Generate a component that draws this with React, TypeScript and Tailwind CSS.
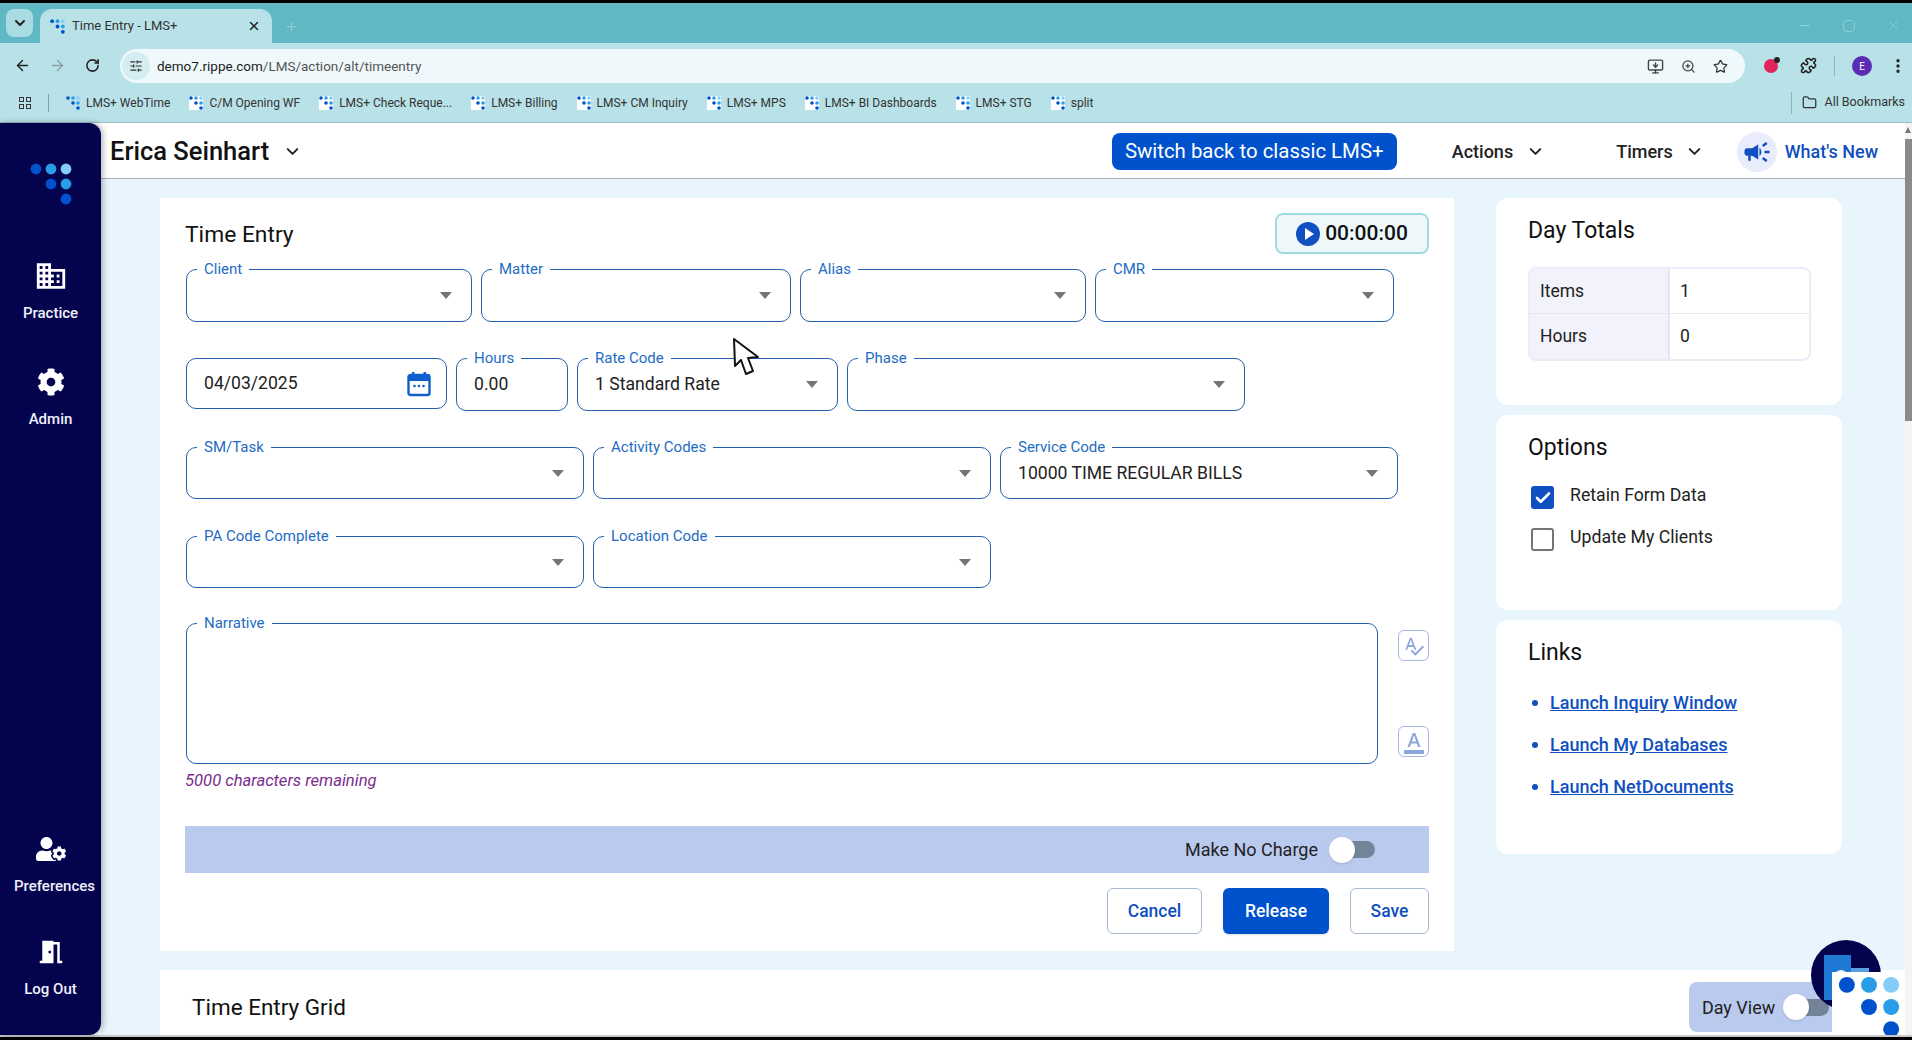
import type { ReactNode } from "react";
import { ArrowLeft, ArrowRight, RotateCw, Star, ZoomIn, Puzzle, Minus, X, Plus, ChevronDown, Folder, MonitorDown, Check, EllipsisVertical, SlidersHorizontal } from "lucide-react";
import { FaCog, FaUserCog } from "react-icons/fa";
import { MdDomain, MdMeetingRoom, MdCampaign, MdSpellcheck, MdFormatColorText } from "react-icons/md";

const BOOKMARKS = [
  "LMS+ WebTime", "C/M Opening WF", "LMS+ Check Reque...", "LMS+ Billing",
  "LMS+ CM Inquiry", "LMS+ MPS", "LMS+ BI Dashboards", "LMS+ STG", "split",
];

// the three-two-one dot mark, used for favicons and the logo
function Dots({ size }: { size: number }) {
  const dots = [
    [4, 4, "#0052cc"], [14, 4, "#2a9de8"], [24, 4, "#84cdf8"],
    [14, 14, "#0052cc"], [24, 14, "#2a9de8"], [24, 24, "#0052cc"],
  ] as const;
  return (
    <svg width={size} height={size} viewBox="0 0 28 28" className="shrink-0">
      {dots.map(([x, y, c]) => <circle key={`${x}-${y}`} cx={x} cy={y} r={3.6} fill={c} />)}
    </svg>
  );
}

function Caret() {
  return <span className="w-0 h-0 border-x-[6px] border-x-transparent border-t-[7px] border-t-[#757575]" />;
}

interface FieldProps {
  label: string;
  width: string;
  height?: string;
  value?: string;
  caret?: boolean;
  children?: ReactNode;
}

function Field({ label, width, height = "h-[53px]", value, caret = true, children }: FieldProps) {
  return (
    <div className={`relative flex items-center justify-between shrink-0 border border-[#2260ac] rounded-[10px] pl-[17px] pr-[19px] bg-white ${width} ${height}`}>
      {label && <span className="absolute left-[10px] top-[-10px] bg-white px-[7px] text-[15px] leading-[18px] text-[#1e6cc4]">{label}</span>}
      <span className="text-[17.6px] text-[#222] whitespace-nowrap">{value}</span>
      {caret && <Caret />}
      {children}
    </div>
  );
}

function NavItem({ icon, label, shift }: { icon: ReactNode; label: string; shift?: boolean }) {
  return (
    <div className="flex flex-col items-center gap-[12px] text-white">
      <div className="h-[30px] flex items-center justify-center">{icon}</div>
      <span className={`text-[15px] font-medium leading-[20px] text-[#eef0fa] whitespace-nowrap ${shift ? "pl-[8px]" : ""}`}>{label}</span>
    </div>
  );
}

function SideCard({ title, height, children }: { title: string; height: string; children: ReactNode }) {
  return (
    <section className={`bg-white rounded-xl pl-[32px] pr-[32px] pt-[17px] ${height}`}>
      <h2 className="text-[23px] leading-[32px] text-[#111]">{title}</h2>
      {children}
    </section>
  );
}

function Toggle() {
  return (
    <div className="relative w-[46px] h-[26px] flex items-center">
      <div className="ml-[10px] w-[36px] h-[17px] rounded-full bg-[#748498]" />
      <div className="absolute left-0 top-0 w-[26px] h-[26px] rounded-full bg-white shadow" />
    </div>
  );
}

function CheckRow({ label, checked }: { label: string; checked?: boolean }) {
  return (
    <div className="flex items-center gap-[16px] h-[23px] ml-[3px]">
      {checked ? (
        <span className="w-[23px] h-[23px] rounded-[3px] bg-[#0f4fc0] flex items-center justify-center">
          <Check className="w-[18px] h-[18px] text-white" strokeWidth={3.5} />
        </span>
      ) : (
        <span className="w-[23px] h-[23px] rounded-[3px] border-2 border-[#757575] bg-white" />
      )}
      <span className="text-[17.7px] text-[#222] -mt-[5px]">{label}</span>
    </div>
  );
}

export default function App() {
  return (
    <div className="w-[1912px] h-[1040px] flex flex-col overflow-hidden bg-black" style={{ fontFamily: "Roboto, sans-serif" }}>
      <div className="h-[3px] shrink-0 bg-black" />

      {/* tab strip */}
      <div className="h-[40px] shrink-0 bg-[#5fb8c4] flex items-end pl-[6px] pr-[11px]">
        <div className="w-[27px] h-[28px] mb-[6px] rounded-lg bg-[#a9dce2] flex items-center justify-center">
          <ChevronDown className="w-4 h-4 text-[#222]" strokeWidth={3} />
        </div>
        <div className="ml-[7px] w-[232px] h-[34px] rounded-t-xl bg-[#b9e2e8] flex items-center pl-[10px] pr-[11px]">
          <Dots size={15} />
          <span className="ml-[7px] text-[13px] text-[#333] flex-1">Time Entry - LMS+</span>
          <X className="w-[14px] h-[14px] text-[#222]" strokeWidth={2.5} />
        </div>
        <Plus className="ml-[12px] mb-[9px] w-[15px] h-[15px] text-[#8fcbd4]" />
        <div className="ml-auto flex items-center gap-[31px] mb-[10px] text-[#8ccdd6]">
          <Minus className="w-[15px] h-[15px]" />
          <div className="w-[12px] h-[12px] border border-[#8ccdd6] rounded-sm" />
          <X className="w-[15px] h-[15px]" strokeWidth={1.5} />
        </div>
      </div>

      {/* address bar */}
      <div className="h-[40px] shrink-0 bg-[#b9e2e8] flex items-start pt-[6px] pl-[14px]">
        <ArrowLeft className="mt-[8px] w-[17px] h-[17px] text-[#222]" />
        <ArrowRight className="mt-[8px] ml-[18px] w-[17px] h-[17px] text-[#8aa0a6]" />
        <RotateCw className="mt-[9px] ml-[19px] w-[15px] h-[15px] text-[#222]" strokeWidth={2.5} />
        <div className="ml-[20px] w-[1625px] h-[34px] rounded-full bg-[#eff9fb] flex items-center pl-[2px] pr-[17px]">
          <span className="w-[28px] h-[28px] rounded-full bg-[#d3edf1] flex items-center justify-center">
            <SlidersHorizontal className="w-[14px] h-[14px] text-[#333]" />
          </span>
          <span className="ml-[7px] text-[13.5px] text-[#222]">demo7.rippe.com<span className="text-[#555]">/LMS/action/alt/timeentry</span></span>
          <MonitorDown className="ml-auto w-[17px] h-[17px] text-[#444]" />
          <ZoomIn className="ml-[17px] w-[15px] h-[15px] text-[#444]" />
          <Star className="ml-[17px] w-[15px] h-[15px] text-[#333]" />
        </div>
        <span className="relative ml-[19px] mt-[10px] w-[14px] h-[14px] rounded-full bg-[#e0245e]">
          <span className="absolute right-[-2px] top-[-2px] w-[6px] h-[6px] rounded-full bg-[#222]" />
        </span>
        <Puzzle className="ml-[22px] mt-[8px] w-[17px] h-[17px] text-[#222]" strokeWidth={2.2} />
        <span className="ml-[17px] mt-[7px] h-[20px] border-l border-[#7fb9c2]" />
        <span className="ml-[17px] mt-[7px] w-[20px] h-[20px] rounded-full bg-[#5b2bb5] text-white text-[10px] flex items-center justify-center">E</span>
        <EllipsisVertical className="ml-[17px] mt-[8px] w-[18px] h-[18px] text-[#222]" strokeWidth={2.5} />
      </div>

      {/* bookmarks */}
      <div className="h-[40px] shrink-0 bg-[#b9e2e8] flex items-center pl-[19px] pr-[7px] border-b border-[#9dbcc4]">
        <div className="grid grid-cols-2 gap-[2px]">
          {[0, 1, 2, 3].map((i) => <span key={i} className="w-[5px] h-[5px] border border-[#333]" />)}
        </div>
        <span className="ml-[17px] mr-[17px] h-[18px] border-l border-[#6fa9b2]" />
        <div className="flex items-center gap-[19px]">
          {BOOKMARKS.map((b, i) => (
            <div key={b} className="flex items-center gap-[6px]">
              <span className={i > 0 ? "bg-white" : ""}><Dots size={14} /></span>
              <span className="text-[12px] text-[#333] whitespace-nowrap">{b}</span>
            </div>
          ))}
        </div>
        <span className="ml-auto h-[22px] border-l border-[#7fb9c2]" />
        <Folder className="ml-[10px] w-[15px] h-[15px] text-[#333]" />
        <span className="ml-[8px] text-[12.5px] text-[#333]">All Bookmarks</span>
      </div>

      {/* app */}
      <div className="h-[912px] shrink-0 flex bg-white">
        <aside className="w-[101px] shrink-0 rounded-r-xl bg-[#04044e] shadow-[2px_0_6px_rgba(0,0,0,0.3)] z-10 flex flex-col items-center pt-[40px] pb-[36px]">
          <Dots size={42} />
          <div className="mt-[56px] flex flex-col gap-[44px]">
            <NavItem icon={<MdDomain className="w-[34px] h-[34px]" />} label="Practice" />
            <NavItem icon={<FaCog className="w-[28px] h-[28px]" />} label="Admin" />
          </div>
          <div className="mt-auto flex flex-col gap-[41px]">
            <NavItem icon={<FaUserCog className="w-[30px] h-[28px]" />} label="Preferences" shift />
            <NavItem icon={<MdMeetingRoom className="w-[30px] h-[30px]" />} label="Log Out" />
          </div>
        </aside>

        <div className="w-[1804px] shrink-0 flex flex-col">
          <header className="h-[56px] shrink-0 bg-white border-b border-[#a9b0b8] flex items-center pl-[9px] pr-[27px] pt-[2px]">
            <span className="text-[25.5px] font-medium text-[#111]">Erica Seinhart</span>
            <ChevronDown className="ml-[14px] w-[19px] h-[19px] text-[#222]" strokeWidth={2.5} />
            <button className="ml-auto w-[285px] h-[37px] rounded-lg bg-[#0052cc] text-white text-[20.4px]">Switch back to classic LMS+</button>
            <span className="ml-[55px] text-[18px] font-medium text-[#222]">Actions</span>
            <ChevronDown className="ml-[13px] w-[19px] h-[19px] text-[#222]" strokeWidth={2.5} />
            <span className="ml-[71px] text-[18px] font-medium text-[#222]">Timers</span>
            <ChevronDown className="ml-[12px] w-[19px] h-[19px] text-[#222]" strokeWidth={2.5} />
            <span className="ml-[33px] w-[40px] h-[40px] rounded-full bg-[#e8ecfb] flex items-center justify-center">
              <MdCampaign className="w-[30px] h-[30px] text-[#0f4fc0]" />
            </span>
            <span className="ml-[8px] text-[18px] font-medium text-[#0f4fc0]">What's New</span>
          </header>

          <main className="relative flex-1 bg-[#e8f5fd] overflow-hidden pl-[59px] pt-[19px]">
            <div className="flex gap-[42px] items-start">
              <section className="w-[1294px] h-[753px] shrink-0 bg-white pl-[26px] pr-[25px] pt-[15px] flex flex-col">
                <div className="h-[41px] flex items-center justify-between">
                  <h1 className="mt-[3px] text-[22.8px] text-[#111] ml-[-1px]">Time Entry</h1>
                  <div className="w-[154px] h-[41px] rounded-lg border-2 border-[#a0dcdf] bg-[#eef8fb] flex items-center justify-center gap-[5px]">
                    <span className="w-[24px] h-[24px] rounded-full bg-[#0f4fc0] flex items-center justify-center">
                      <span className="ml-[2px] w-0 h-0 border-y-[6px] border-y-transparent border-l-[9px] border-l-white" />
                    </span>
                    <span className="text-[21px] font-medium text-[#111]">00:00:00</span>
                  </div>
                </div>

                <div className="mt-[15px] flex gap-[9px]">
                  <Field label="Client" width="w-[286px]" />
                  <Field label="Matter" width="w-[310px]" />
                  <Field label="Alias" width="w-[286px]" />
                  <Field label="CMR" width="w-[299px]" />
                </div>

                <div className="mt-[36px] flex gap-[9px] items-start">
                  <Field label="" width="w-[261px]" height="h-[51px]" value="04/03/2025" caret={false}>
                    <svg width="24" height="26" viewBox="0 0 24 26" className="-mr-[4px]">
                      <rect x="1.5" y="4" width="21" height="20" rx="2" fill="none" stroke="#0f5fcc" strokeWidth="2.4" />
                      <rect x="1.5" y="4" width="21" height="6" fill="#0f5fcc" />
                      <rect x="5" y="1" width="2.5" height="5" fill="#0f5fcc" />
                      <rect x="16.5" y="1" width="2.5" height="5" fill="#0f5fcc" />
                      <circle cx="7.5" cy="15" r="1.3" fill="#0f5fcc" />
                      <circle cx="12" cy="15" r="1.3" fill="#0f5fcc" />
                      <circle cx="16.5" cy="15" r="1.3" fill="#0f5fcc" />
                    </svg>
                  </Field>
                  <Field label="Hours" width="w-[112px]" value="0.00" caret={false} />
                  <Field label="Rate Code" width="w-[261px]" value="1 Standard Rate" />
                  <Field label="Phase" width="w-[398px]" />
                </div>

                <div className="mt-[36px] flex gap-[9px]">
                  <Field label="SM/Task" width="w-[398px]" height="h-[52px]" />
                  <Field label="Activity Codes" width="w-[398px]" height="h-[52px]" />
                  <Field label="Service Code" width="w-[398px]" height="h-[52px]" value="10000 TIME REGULAR BILLS" />
                </div>

                <div className="mt-[37px] flex gap-[9px]">
                  <Field label="PA Code Complete" width="w-[398px]" height="h-[52px]" />
                  <Field label="Location Code" width="w-[398px]" height="h-[52px]" />
                </div>

                <div className="mt-[35px] flex gap-[20px]">
                  <Field label="Narrative" width="w-[1192px]" height="h-[141px]" caret={false} />
                  <div className="py-[7px] flex flex-col justify-between">
                    <span className="w-[31px] h-[31px] rounded-md border border-[#a9b9e4] flex items-center justify-center">
                      <MdSpellcheck className="w-[22px] h-[22px] text-[#8ea6de]" />
                    </span>
                    <span className="w-[31px] h-[31px] rounded-md border border-[#a9b9e4] flex items-center justify-center">
                      <MdFormatColorText className="w-[24px] h-[24px] text-[#8ea6de]" />
                    </span>
                  </div>
                </div>

                <p className="mt-[7px] text-[16.6px] leading-[20px] italic text-[#7b2d8e] -ml-px">5000 characters remaining</p>

                <div className="mt-[35px] -ml-px h-[47px] bg-[#b9caee] flex items-center justify-end gap-[11px] pr-[54px]">
                  <span className="text-[18px] text-[#222]">Make No Charge</span>
                  <Toggle />
                </div>

                <div className="mt-[15px] flex justify-end">
                  <button className="w-[95px] h-[46px] rounded-md border border-[#a9b9d4] bg-white text-[17.5px] font-medium text-[#0f4fc0]">Cancel</button>
                  <button className="ml-[21px] w-[106px] h-[46px] rounded-md bg-[#0052cc] shadow text-[17.5px] font-medium text-white">Release</button>
                  <button className="ml-[21px] w-[79px] h-[46px] rounded-md border border-[#a9b9d4] bg-white text-[17.5px] font-medium text-[#0f4fc0]">Save</button>
                </div>
              </section>

              <div className="w-[346px] shrink-0 flex flex-col gap-[10px]">
                <SideCard title="Day Totals" height="h-[207px]">
                  <div className="mt-[20px] w-[283px] grid grid-cols-[140px_1fr] rounded-lg border-2 border-[#ecebf8] overflow-hidden text-[17.5px] text-[#222]">
                    <div className="h-[45px] bg-[#f1f2fb] pl-[10px] flex items-center border-b border-r-2 border-[#e4e4f2]">Items</div>
                    <div className="h-[45px] pl-[10px] flex items-center border-b border-[#e4e4f2]">1</div>
                    <div className="h-[45px] bg-[#f1f2fb] pl-[10px] flex items-center border-r-2 border-[#e4e4f2]">Hours</div>
                    <div className="h-[45px] pl-[10px] flex items-center">0</div>
                  </div>
                </SideCard>
                <SideCard title="Options" height="h-[195px]">
                  <div className="mt-[22px] flex flex-col gap-[19px]">
                    <CheckRow label="Retain Form Data" checked />
                    <CheckRow label="Update My Clients" />
                  </div>
                </SideCard>
                <SideCard title="Links" height="h-[234px]">
                  <ul className="mt-[22px] pl-[4px] flex flex-col gap-[18px] text-[18px] leading-[24px] font-medium text-[#0f4fc0]">
                    {["Launch Inquiry Window", "Launch My Databases", "Launch NetDocuments"].map((l) => (
                      <li key={l} className="flex items-center gap-[12px]">
                        <span className="w-[6px] h-[6px] rounded-full bg-[#0f4fc0]" />
                        <span className="underline">{l}</span>
                      </li>
                    ))}
                  </ul>
                </SideCard>
              </div>
            </div>

            <section className="mt-[19px] h-[80px] bg-white flex items-start pl-[32px] pt-[21px]">
              <h2 className="text-[22.5px] leading-[32px] text-[#111]">Time Entry Grid</h2>
              <div className="ml-[1343px] mt-[-9px] w-[160px] h-[50px] shrink-0 rounded-lg bg-[#b9caee] flex items-center pl-[13px] gap-[8px]">
                <span className="text-[18px] text-[#222]">Day View</span>
                <Toggle />
              </div>
            </section>

            {/* floating Outlook button and logo */}
            <div className="absolute left-[1710px] top-[761px] w-[70px] h-[70px] rounded-full bg-[#04044e]">
              <span className="absolute left-[13px] top-[15px] w-[27px] h-[45px] bg-[#1e78d4]" />
              <span className="absolute left-[23px] top-[30px] w-[14px] h-[14px] rounded-full bg-[#e8f2fb]" />
              <span className="absolute left-[40px] top-[28px] w-[18px] h-[24px] bg-[#5a9ee0]" />
            </div>
            <div className="absolute left-[1731px] top-[793px] w-[73px] h-[70px] bg-white flex items-center justify-center">
              <Dots size={62} />
            </div>

            {/* mouse pointer */}
            <svg className="absolute left-[632px] top-[159px]" width="28" height="40" viewBox="0 0 28 40">
              <path d="M1 1 L2 28 L8 22 L13 36 L20 33 L15 20 L25 19 Z" fill="#fff" stroke="#111" strokeWidth="2" strokeLinejoin="round" />
            </svg>
          </main>
        </div>

        {/* page scrollbar */}
        <div className="w-[7px] shrink-0 bg-[#f4f4f4] flex flex-col">
          <span className="mt-[4px] w-0 h-0 border-x-[3.5px] border-x-transparent border-b-[6px] border-b-[#777]" />
          <span className="mt-[6px] h-[282px] bg-[#8a8a8a]" />
        </div>
      </div>

      <div className="h-[2px] shrink-0 bg-[#c9c9c9]" />
      <div className="flex-1 bg-black" />
    </div>
  );
}
